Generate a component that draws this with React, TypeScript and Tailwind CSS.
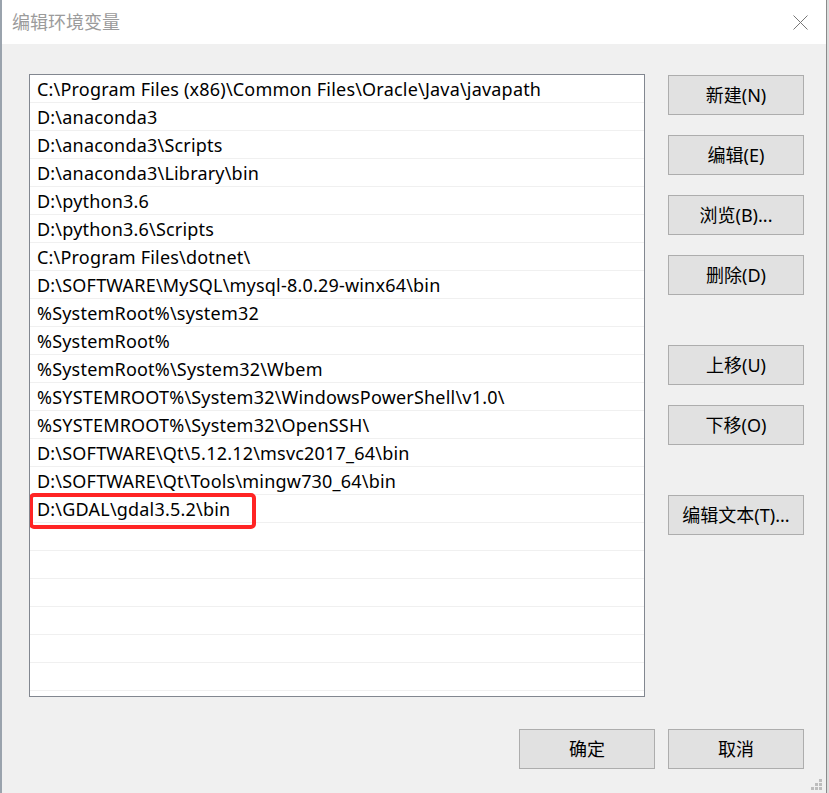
import React from 'react';

const paths = [
    'C:\\Program Files (x86)\\Common Files\\Oracle\\Java\\javapath',
    'D:\\anaconda3',
    'D:\\anaconda3\\Scripts',
    'D:\\anaconda3\\Library\\bin',
    'D:\\python3.6',
    'D:\\python3.6\\Scripts',
    'C:\\Program Files\\dotnet\\',
    'D:\\SOFTWARE\\MySQL\\mysql-8.0.29-winx64\\bin',
    '%SystemRoot%\\system32',
    '%SystemRoot%',
    '%SystemRoot%\\System32\\Wbem',
    '%SYSTEMROOT%\\System32\\WindowsPowerShell\\v1.0\\',
    '%SYSTEMROOT%\\System32\\OpenSSH\\',
    'D:\\SOFTWARE\\Qt\\5.12.12\\msvc2017_64\\bin',
    'D:\\SOFTWARE\\Qt\\Tools\\mingw730_64\\bin',
    'D:\\GDAL\\gdal3.5.2\\bin',
];

const font = { fontFamily: '"Noto Sans", "Noto Sans CJK SC", sans-serif' };

const WinButton = ({ label, className = '' }: { label: string; className?: string }) => (
    <button
        className={`w-[136px] h-[40px] bg-[#e1e1e1] border border-[#adadad] text-[18px] text-black flex items-center justify-center ${className}`}
    >
        {label}
    </button>
);

export default function App() {
    const rows = [...paths, ...Array(8).fill('')];

    return (
        <div className="w-[829px] h-[793px] flex overflow-hidden bg-[#f0f0f0]" style={font}>
            {/* desktop strip on the left */}
            <div className="w-[2px] h-full bg-[#9aa3ad]" />

            <div className="flex-1 flex flex-col relative">
                {/* Title bar */}
                <div className="h-[44px] bg-white flex items-center justify-between pl-[10px] pr-[18px]">
                    <span className="text-[18px] text-[#9b9b9b]">编辑环境变量</span>
                    <svg width="15" height="15" viewBox="0 0 15 15">
                        <path d="M0.5 0.5 L14.5 14.5 M14.5 0.5 L0.5 14.5" stroke="#777" strokeWidth="1" />
                    </svg>
                </div>

                {/* Body */}
                <div className="flex-1 flex flex-col pt-[30px] pl-[27px] pr-[22px]">
                    <div className="flex gap-[23px]">
                        {/* List */}
                        <div className="w-[616px] h-[623px] bg-white border border-[#828790] overflow-hidden">
                            {rows.map((p, i) => (
                                <div
                                    key={i}
                                    className="relative h-[28px] border-b border-[#f0f0f0] pl-[7px] pt-[1px] flex items-center text-[18px] tracking-[0.2px] text-black whitespace-nowrap"
                                >
                                    {p}
                                    {i === 15 && (
                                        <div className="absolute left-[-1px] top-[-2px] w-[227px] h-[36px] border-[4px] border-[#ff2424] rounded-[5px]" />
                                    )}
                                </div>
                            ))}
                        </div>

                        {/* Side buttons */}
                        <div className="flex flex-col pt-[1px]">
                            <WinButton label="新建(N)" />
                            <WinButton label="编辑(E)" className="mt-[20px]" />
                            <WinButton label="浏览(B)..." className="mt-[20px]" />
                            <WinButton label="删除(D)" className="mt-[20px]" />
                            <WinButton label="上移(U)" className="mt-[50px]" />
                            <WinButton label="下移(O)" className="mt-[20px]" />
                            <WinButton label="编辑文本(T)..." className="mt-[50px] h-[39px]" />
                        </div>
                    </div>

                    {/* Bottom buttons */}
                    <div className="flex justify-end gap-[13px] mt-[32px]">
                        <WinButton label="确定" className="h-[39px]" />
                        <WinButton label="取消" className="h-[39px]" />
                    </div>
                </div>

                {/* resize grip */}
                <svg className="absolute right-[3px] bottom-[2px]" width="12" height="12" viewBox="0 0 12 12">
                    <g fill="#bdbdbd">
                        <rect x="8" y="0" width="3" height="3" />
                        <rect x="4" y="4" width="3" height="3" />
                        <rect x="8" y="4" width="3" height="3" />
                        <rect x="0" y="8" width="3" height="3" />
                        <rect x="4" y="8" width="3" height="3" />
                        <rect x="8" y="8" width="3" height="3" />
                    </g>
                </svg>
            </div>

            {/* window edge + desktop on the right */}
            <div className="w-[1px] h-full bg-[#8a8a8a]" />
            <div className="w-[2px] h-full bg-[#dcdcdc]" />
        </div>
    );
}
